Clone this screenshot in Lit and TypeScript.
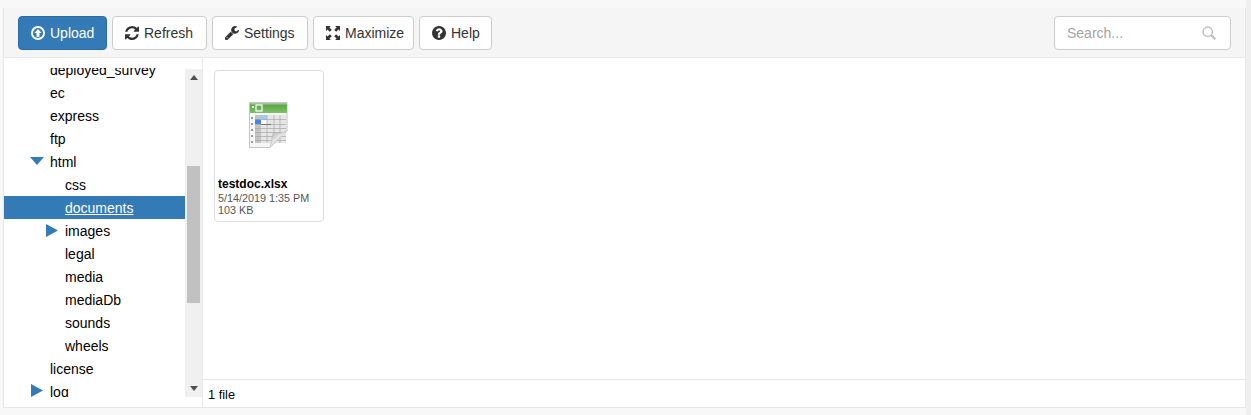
import { LitElement, html, css, svg } from "lit";
import { customElement } from "lit/decorators.js";

const upload = svg`<path fill="currentColor" fill-rule="evenodd" d="M7 0a7 7 0 1 1 0 14A7 7 0 0 1 7 0zm0 1.900a5.100 5.100 0 1 0 0 10.200A5.100 5.100 0 0 0 7 1.900zm0 1L10.600 6.900H8.500v3.900H5.500V6.900H3.400z"/>`;
const refresh = svg`<path fill="currentColor" d="M1639 1056q0 5-1 7-64 268-268 434.500t-478 166.500q-146 0-282.500-55t-243.500-157l-129 129q-19 19-45 19t-45-19-19-45v-448q0-26 19-45t45-19h448q26 0 45 19t19 45-19 45l-137 137q71 66 161 102t187 36q134 0 250-65t186-179q11-17 53-117 8-23 30-23h192q13 0 22.500 9.500t9.500 22.500zm25-800v448q0 26-19 45t-45 19h-448q-26 0-45-19t-19-45 19-45l138-138q-148-137-349-137-134 0-250 65t-186 179q-11 17-53 117-8 23-30 23h-199q-13 0-22.500-9.500t-9.500-22.500v-7q65-268 270-434.500t480-166.500q146 0 284 55.500t245 156.500l130-129q19-19 45-19t45 19 19 45z"/>`;
const wrench = svg`<path fill="currentColor" d="M448 1472q0-26-19-45t-45-19-45 19-19 45 19 45 45 19 45-19 19-45zm644-420l-682 682q-37 37-90 37-52 0-91-37l-106-108q-38-36-38-90 0-53 38-91l681-681q39 98 114.500 173.500t173.500 114.500zm634-435q0 39-23 106-47 134-164.500 217.500t-258.500 83.500q-185 0-316.500-131.500t-131.500-316.500 131.500-316.500 316.500-131.500q58 0 121.500 16.500t107.500 46.500q16 11 16 28t-16 28l-293 169v224l193 107q5-3 79-48.500t135.500-81 70.500-35.500q15 0 23.500 10t8.500 25z"/>`;
const maxi = svg`<path fill="currentColor" d="M0 0h5.600L3.900 1.700 6.600 4.400 4.400 6.600 1.700 3.900 0 5.600zM16 0v5.600L14.300 3.900 11.600 6.600 9.400 4.400 12.100 1.700 10.400 0zM0 16v-5.600L1.700 12.100 4.400 9.400 6.600 11.600 3.900 14.300 5.600 16zM16 16H10.400L12.100 14.300 9.400 11.600 11.600 9.400 14.300 12.100 16 10.400z"/>`;
const help = svg`<path fill="currentColor" d="M1024 1376v-192q0-14-9-23t-23-9h-192q-14 0-23 9t-9 23v192q0 14 9 23t23 9h192q14 0 23-9t9-23zm256-672q0-88-55.500-163t-138.500-116-170-41q-243 0-371 213-15 24 8 42l132 100q7 6 19 6 16 0 25-12 53-68 86-92 34-24 86-24 48 0 85.500 26t37.500 59q0 38-20 61t-68 45q-63 28-115.500 86.500t-52.500 125.500v36q0 14 9 23t23 9h192q14 0 23-9t9-23q0-19 21.500-49.500t54.500-49.500q32-18 49-28.500t46-35 44.500-48 28-60.500 12.500-81zm384 192q0 209-103 385.500t-279.500 279.500-385.500 103-385.500-103-279.500-279.500-103-385.500 103-385.500 279.500-279.500 385.500-103 385.500 103 279.500 279.500 103 385.500z"/>`;
const search = svg`<g fill="none" stroke="currentColor"><circle cx="5.700" cy="5.700" r="4.700" stroke-width="1.400"/><path d="M9.200 9.200 13.300 13.300" stroke-width="2"/></g>`;

function icon(body: unknown, vb: string) {
  return html`<svg class="ic" width="14" height="14" viewBox=${vb} preserveAspectRatio="none">${body}</svg>`;
}

const rows: [string, number, string][] = [
  ["deployed_survey", 0, ""],
  ["ec", 0, ""],
  ["express", 0, ""],
  ["ftp", 0, ""],
  ["html", 0, ""],
  ["css", 1, ""],
  ["documents", 1, "sel"],
  ["images", 1, ""],
  ["legal", 1, ""],
  ["media", 1, ""],
  ["mediaDb", 1, ""],
  ["sounds", 1, ""],
  ["wheels", 1, ""],
  ["license", 0, ""],
  ["log", 0, ""],
];

@customElement("app-root")
export class AppRoot extends LitElement {
  static styles = css`
    :host {
      display: flex;
      width: 1251px;
      height: 415px;
      overflow: hidden;
      background: #f8f8f8;
      font-family: "Liberation Sans", Arial, sans-serif;
      font-size: 14px;
      color: #333;
    }
    .frame {
      display: flex;
      flex-direction: column;
      flex: none;
      margin: 8px 0 0 3px;
      width: 1243px;
      height: 400px;
      background: #fff;
      box-sizing: border-box;
      border: solid #e7e7e7;
      border-width: 0 1px 1px;
    }
    .strip { flex: 1; background: #efefef; }
    .toolbar {
      display: flex;
      flex: none;
      align-items: flex-start;
      justify-content: space-between;
      height: 50px;
      box-sizing: border-box;
      padding: 8px 14px 0 14px;
      background: #f5f5f5;
      border-bottom: 1px solid #e7e7e7;
    }
    .btns { display: flex; gap: 5px; }
    .btn {
      display: flex;
      align-items: center;
      gap: 5px;
      height: 34px;
      box-sizing: border-box;
      padding-left: 12px;
      background: #fff;
      border: 1px solid #ccc;
      border-radius: 4px;
      color: #333;
    }
    .btn.primary { background: #337ab7; border-color: #2e6da4; color: #fff; }
    .ic { display: block; flex: none; }
    .search {
      display: flex;
      align-items: center;
      justify-content: space-between;
      width: 177px;
      height: 34px;
      box-sizing: border-box;
      padding: 0 14px 0 12px;
      background: #fff;
      border: 1px solid #ccc;
      border-radius: 4px;
      color: #a4a4a4;
    }
    .search .ic { color: #bbb; }
    .body { flex: 1; display: flex; min-height: 0; }
    .tree {
      position: relative;
      width: 199px;
      flex: none;
      box-sizing: border-box;
      border-right: 1px solid #e7e7e7;
    }
    .clip { margin-top: 10px; width: 181px; height: 329px; overflow: hidden; }
    .rows { margin-top: -10px; }
    .row {
      display: flex;
      align-items: center;
      height: 23px;
      color: #000;
      font-size: 14px;
    }
    .row.sel { background: #337ab7; color: #fff; }
    .row.sel span { text-decoration: underline; }
    .row.d0 { padding-left: 46px; }
    .row.d1 { padding-left: 61px; }
    .tw { position: absolute; color: #337ab7; }
    .tw-html { left: 26px; top: 99px; }
    .tw-images { left: 42px; top: 166px; }
    .tw-log { left: 27px; top: 326px; }
    .scroll {
      position: absolute;
      top: 11px;
      right: 0;
      width: 17px;
      height: 328px;
      background: #f0f0f0;
    }
    .thumb {
      position: absolute;
      left: 2px;
      width: 13px;
      top: 97px;
      height: 137px;
      background: #c1c1c1;
    }
    .arr { position: absolute; left: 5px; }
    .arr.up { top: 6px; }
    .arr.down { top: 317px; }
    .main { flex: 1; display: flex; flex-direction: column; min-width: 0; }
    .files { flex: 1; padding: 12px 11px; }
    .card {
      width: 110px;
      height: 152px;
      box-sizing: border-box;
      border: 1px solid #ddd;
      border-radius: 4px;
      padding: 31px 3px 0;
      color: #555;
      font-size: 10.800px;
      line-height: 12px;
    }
    .thumbicon { margin: 0 0 0 31px; display: block; }
    .name { margin: 28px 0 1px; font-size: 12px; line-height: 14px; font-weight: 700; color: #000; }
    .status {
      flex: none;
      height: 28px;
      box-sizing: border-box;
      border-top: 1px solid #e7e7e7;
      padding: 1px 0 0 5px;
      display: flex;
      align-items: center;
      font-size: 12.800px;
      color: #000;
    }
  `;

  private btn(label: string, ic: unknown, w: number, primary = false) {
    return html`<div class="btn ${primary ? "primary" : ""}" style="width:${w}px">${ic}<span>${label}</span></div>`;
  }

  render() {
    return html`<div class="frame">
        <div class="toolbar">
          <div class="btns">
            ${this.btn("Upload", icon(upload, "0 0 14 14"), 89, true)}
            ${this.btn("Refresh", icon(refresh, "128 128 1536 1536"), 95)}
            ${this.btn("Settings", icon(wrench, "128 128 1600 1600"), 96)}
            ${this.btn("Maximize", icon(maxi, "0 0 16 16"), 101)}
            ${this.btn("Help", icon(help, "128 128 1536 1536"), 73)}
          </div>
          <div class="search"><span>Search...</span>${icon(search, "0 0 14 14")}</div>
        </div>
        <div class="body">
          <div class="tree">
            <div class="clip">
              <div class="rows">
                ${rows.map(([n, d, k]) => html`<div class="row d${d} ${k}"><span>${n}</span></div>`)}
              </div>
            </div>
            <svg class="tw tw-html" width="14" height="8" viewBox="0 0 14 8"><path fill="currentColor" d="M0 0h14L7 8z"/></svg>
            <svg class="tw tw-images" width="12" height="13" viewBox="0 0 12 13"><path fill="currentColor" d="M0 0v13l12-6.500z"/></svg>
            <svg class="tw tw-log" width="12" height="13" viewBox="0 0 12 13"><path fill="currentColor" d="M0 0v13l12-6.500z"/></svg>
            <div class="scroll">
              <svg class="arr up" width="8" height="5" viewBox="0 0 8 5"><path fill="#505050" d="M0 5h8L4 0z"/></svg>
              <div class="thumb"></div>
              <svg class="arr down" width="8" height="5" viewBox="0 0 8 5"><path fill="#505050" d="M0 0h8L4 5z"/></svg>
            </div>
          </div>
          <div class="main">
            <div class="files">
              <div class="card">
                <svg class="thumbicon" width="39" height="47" viewBox="0 0 39 47">
                  <defs>
                    <linearGradient id="hd" x1="0" y1="0" x2="0" y2="1">
                      <stop offset="0" stop-color="#b9c9b0"/>
                      <stop offset=".25" stop-color="#5da848"/>
                      <stop offset="1" stop-color="#7fc066"/>
                    </linearGradient>
                    <linearGradient id="fl" x1="0" y1="0" x2="1" y2="1">
                      <stop offset="0" stop-color="#a6a6a6"/>
                      <stop offset=".45" stop-color="#e6e6e6"/>
                      <stop offset="1" stop-color="#ffffff"/>
                    </linearGradient>
                    <filter id="sf" x="-5%" y="-5%" width="110%" height="110%"><feGaussianBlur stdDeviation=".25"/></filter>
                  </defs>
                  <g filter="url(#sf)">
                    <path fill="#f6f6f6" stroke="#c4c4c4" d="M.5.500h37.500v28L21 45.500H.5z"/>
                    <rect x="1" y="1" width="37" height="10" fill="url(#hd)"/>
                    <rect x="7" y="3" width="6" height="6" fill="none" stroke="#fff" stroke-width="1.200"/>
                    <rect x="3" y="4" width="2" height="2" fill="#e8f2e2"/>
                    <rect x="6" y="13" width="31" height="28" fill="#e6e6e6"/>
                    <rect x="6" y="13" width="6" height="28" fill="#c4c4c4"/>
                    <rect x="6" y="17" width="6" height="5" fill="#3f86e8"/>
                    <rect x="11" y="13" width="7" height="5" fill="#a8c8f4"/>
                    <rect x="12" y="18" width="6" height="4" fill="#fff"/>
                    <path stroke="#a6a6a6" stroke-width=".7" d="M6 17.500h31M6 22.500h31M6 26.500h31M6 30.500h31M6 34.500h31M6 38.500h31M18 13v28M25 13v28M31 13v28"/>
                    <path stroke="#666" stroke-width=".8" d="M12 22.500h10"/>
                    <path fill="#999" d="M2 15h2v2H2zM2 21h2v2H2zM2 27h2v2H2zM2 33h2v2H2zM2 39h2v2H2z"/>
                    <path fill="url(#fl)" stroke="#bdbdbd" stroke-width=".6" d="M21 45.500 24 31c5 1.500 9 0 14-2.500z"/>
                  </g>
                </svg>
                <div class="name">testdoc.xlsx</div>
                <div>5/14/2019 1:35 PM</div>
                <div>103 KB</div>
              </div>
            </div>
            <div class="status">1 file</div>
          </div>
        </div>
      </div>
      <div class="strip"></div>`;
  }
}
